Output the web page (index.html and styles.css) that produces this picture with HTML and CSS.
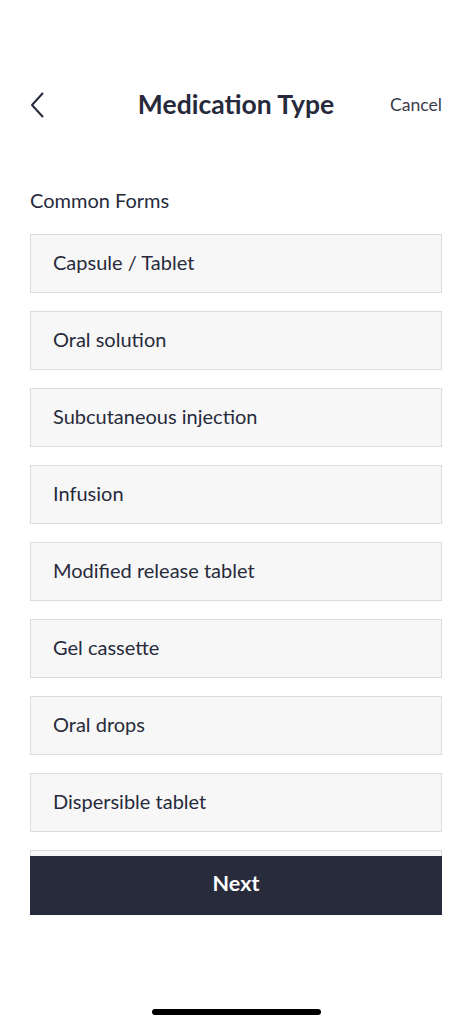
FILE: index.html
```html
<!DOCTYPE html>
<html>
<head>
<meta charset="utf-8">
<link rel="stylesheet" href="styles.css">
</head>
<body>
<div class="screen">
  <header class="nav">
    <svg class="back" width="14" height="26" viewBox="0 0 14 26"><path d="M12.5 1.5 L2 13 L12.5 24.5" fill="none" stroke="#272a3b" stroke-width="2" stroke-linecap="round" stroke-linejoin="round"/></svg>
    <h1 class="title">Medication Type</h1>
    <span class="cancel">Cancel</span>
  </header>
  <div class="label">Common Forms</div>
  <div class="list">
    <div class="item">Capsule / Tablet</div>
    <div class="item">Oral solution</div>
    <div class="item">Subcutaneous injection</div>
    <div class="item">Infusion</div>
    <div class="item">Modified release tablet</div>
    <div class="item">Gel cassette</div>
    <div class="item">Oral drops</div>
    <div class="item">Dispersible tablet</div>
    <div class="item"></div>
  </div>
  <button class="next">Next</button>
  <div class="home"></div>
</div>
</body>
</html>
```
FILE: styles.css
```css
html, body { margin: 0; padding: 0; background: #fff; }
body { font-family: Lato, "Noto Sans", sans-serif; color: #272a3b; }
.screen { width: 472px; height: 1024px; display: flex; flex-direction: column; }
.nav { margin-top: 82px; height: 44px; padding: 0 30px; display: flex; align-items: center; justify-content: space-between; position: relative; }
.back { display: block; margin-top: 2px; }
.title { position: absolute; left: 0; right: 0; text-align: center; margin: 0; font-size: 26.5px; font-weight: 700; pointer-events: none; }
.cancel { font-size: 17.6px; color: #3a3c4a; }
.label { margin: 62px 30px 0; font-size: 20px; line-height: 24px; }
.list { margin: 22px 30px 0; height: 622px; overflow: hidden; display: flex; flex-direction: column; gap: 18px; }
.item { flex: 0 0 59px; box-sizing: border-box; background: #f7f7f7; border: 1px solid #dcdcdc; display: flex; align-items: center; padding: 0 0 4px 22px; font-size: 20px; }
.next { margin: 0 30px; height: 59px; border: 0; padding: 0 0 6px; background: #282b3c; color: #fff; font-family: inherit; font-size: 21.5px; font-weight: 700; }
.home { margin: 94px auto 0; width: 169px; height: 6px; border-radius: 3px; background: #000; }
```
